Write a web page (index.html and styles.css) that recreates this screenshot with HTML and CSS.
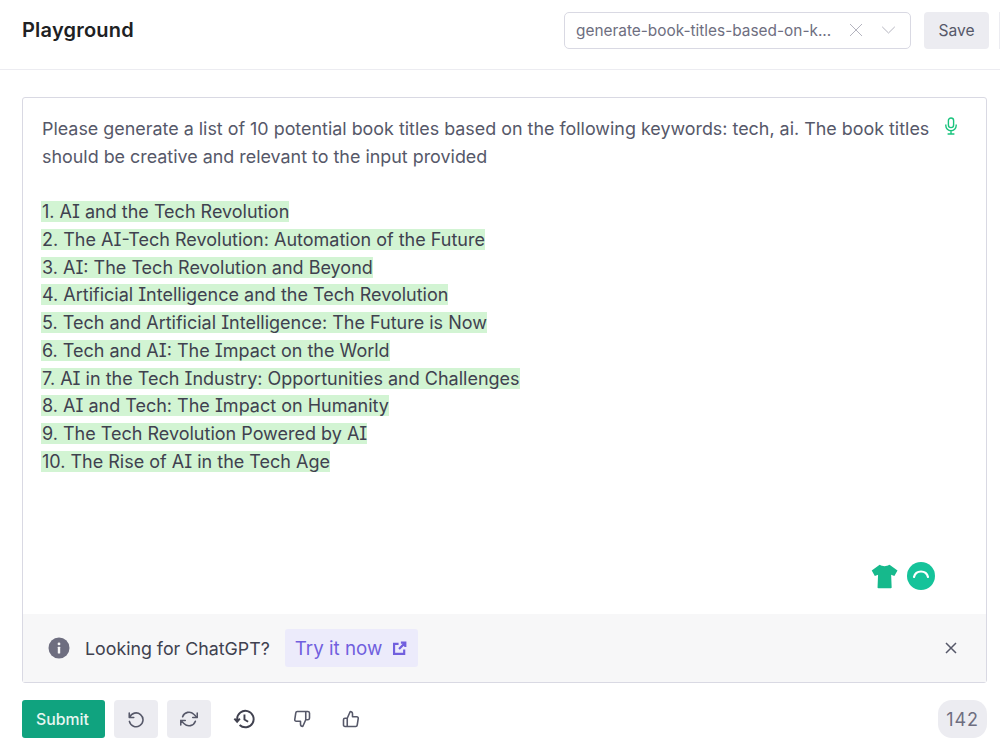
FILE: index.html
```html
<!DOCTYPE html>
<html lang="en">
<head>
<meta charset="utf-8">
<title>Playground</title>
<link rel="stylesheet" href="styles.css">
</head>
<body>
<header class="topbar">
  <h1 class="title">Playground</h1>
  <div class="top-actions">
    <div class="preset">
      <span class="preset-text">generate-book-titles-based-on-k...</span>
      <svg class="preset-x" viewBox="0 0 14 14"><path d="M1 1l12 12M13 1L1 13"/></svg>
      <svg class="preset-chev" viewBox="0 0 14 8"><path d="M.7.8L7 7l6.3-6.2"/></svg>
    </div>
    <button class="btn-save">Save</button>
    <span class="next-edge"></span>
  </div>
</header>
<main class="content">
  <section class="editor">
    <div class="editor-body">
      <div class="prompt">
        <p class="prompt-text">Please generate a list of 10 potential book titles based on the following keywords: tech, ai. The book titles should be creative and relevant to the input provided</p>
        <svg class="mic" viewBox="0 0 14 18"><rect x="4.4" y="1" width="5.2" height="9.6" rx="2.6"/><path d="M1.8 7.5v1a5.2 5.2 0 0 0 10.4 0v-1M7 13.7V17M3.6 17h6.8"/></svg>
      </div>
      <ol class="result">
        <li><mark>1. AI and the Tech Revolution</mark></li>
        <li><mark>2. The AI-Tech Revolution: Automation of the Future</mark></li>
        <li><mark>3. AI: The Tech Revolution and Beyond</mark></li>
        <li><mark>4. Artificial Intelligence and the Tech Revolution</mark></li>
        <li><mark>5. Tech and Artificial Intelligence: The Future is Now</mark></li>
        <li><mark>6. Tech and AI: The Impact on the World</mark></li>
        <li><mark>7. AI in the Tech Industry: Opportunities and Challenges</mark></li>
        <li><mark>8. AI and Tech: The Impact on Humanity</mark></li>
        <li><mark>9. The Tech Revolution Powered by AI</mark></li>
        <li><mark>10. The Rise of AI in the Tech Age</mark></li>
      </ol>
      <div class="floaters">
        <svg class="shirt" viewBox="0 0 26 24"><path d="M8.600 .8c1.200 1 2.700 1.400 4.400 1.400s3.200-.4 4.400-1.400l.8.100 7.300 5.300-3 5.300-3.100-1.300.5 12.600-.8.400H7.100l-.8-.400.5-12.600-3.100 1.300-3-5.300 7.300-5.300z"/></svg>
        <svg class="grammar" viewBox="0 0 28 28"><circle cx="14" cy="14" r="14"/><path d="M7 15a7.200 7.200 0 0 1 14 0"/></svg>
      </div>
    </div>
    <div class="notice">
      <svg class="info" viewBox="0 0 22 22"><circle cx="11" cy="11" r="10.500"/><rect class="info-mark" x="9.800" y="9.700" width="2.400" height="6.800" rx=".6"/><circle class="info-mark" cx="11" cy="6.900" r="1.400"/></svg>
      <span class="notice-text">Looking for ChatGPT?</span>
      <a class="try-link">Try it now
        <svg class="ext" viewBox="0 0 16 16"><path d="M7 3H2.200v10.800H13V9M9.500 1.800h4.700v4.700M14 2L7.500 8.500"/></svg>
      </a>
      <svg class="notice-close" viewBox="0 0 12 12"><path d="M1 1l10 10M11 1L1 11"/></svg>
    </div>
  </section>
  <footer class="toolbar">
    <button class="btn-submit">Submit</button>
    <button class="btn-icon">
      <svg class="tool" viewBox="0 0 24 24"><path d="M3 4v6h6M3.600 9.700a9.200 9.200 0 1 1-.4 5.500"/></svg>
    </button>
    <button class="btn-icon">
      <svg class="tool" viewBox="0 0 24 24"><path d="M23 4v6h-6M1 20v-6h6M3.500 9a9 9 0 0 1 14.900-3.400L23 10M1 14l4.600 4.400A9 9 0 0 0 20.500 15"/></svg>
    </button>
    <button class="btn-plain btn-history">
      <svg class="tool-history" viewBox="0 0 24 24"><path d="M1.500 11.500l3 3.500 3-3.500M4.500 14.500V12a9 9 0 1 1 2.700 6.500M12.500 7v5.500l4 2.500"/></svg>
    </button>
    <button class="btn-plain btn-down">
      <svg class="tool" viewBox="0 0 24 24"><path d="M10 15v4a3 3 0 0 0 3 3l4-9V2H5.720a2 2 0 0 0-2 1.700l-1.380 9a2 2 0 0 0 2 2.300zM17 2h2.670A2.310 2.310 0 0 1 22 4v7a2.310 2.310 0 0 1-2.330 2H17"/></svg>
    </button>
    <button class="btn-plain btn-up">
      <svg class="tool" viewBox="0 0 24 24"><path d="M14 9V5a3 3 0 0 0-3-3l-4 9v11h11.280a2 2 0 0 0 2-1.700l1.380-9a2 2 0 0 0-2-2.300zM7 22H4a2 2 0 0 1-2-2v-7a2 2 0 0 1 2-2h3"/></svg>
    </button>
    <span class="count">142</span>
  </footer>
</main>
</body>
</html>
```
FILE: styles.css
```css
* { box-sizing: border-box; }
html, body { margin: 0; height: 750px; overflow: hidden; }
body {
  background: #fff;
  font-family: Inter, "Liberation Sans", sans-serif;
  color: #353740;
  font-feature-settings: "cv08" 1;
}
button { font: inherit; border: 0; padding: 0; }
.topbar {
  height: 70px;
  display: flex;
  align-items: center;
  justify-content: space-between;
  padding: 0 0 9px 22px;
  border-bottom: 1px solid #ececf1;
}
.title { margin: 0; font-size: 20px; font-weight: 600; color: #202123; letter-spacing: .01em; }
.top-actions { display: flex; align-items: center; gap: 13px; }
.preset {
  width: 347px;
  height: 37px;
  display: flex;
  align-items: center;
  padding: 0 14px 0 11px;
  border: 1px solid #d9d9e3;
  border-radius: 5px;
  font-size: 15.400px;
  color: #6e6e80;
}
.preset-text { flex: 1; white-space: nowrap; }
.preset svg { fill: none; stroke: #b4b4bf; }
.preset-x { width: 14px; height: 14px; margin-right: 18px; }
.preset-chev { width: 15px; height: 8px; }
.btn-save {
  width: 65px;
  height: 37px;
  border-radius: 4px;
  background: #ececf1;
  color: #565869;
  font-size: 15.600px;
}
.next-edge { width: 1px; height: 37px; background: #ececf1; margin-left: -3px; }
.content { padding: 27px 13px 0 22px; }
.editor {
  height: 586px;
  display: flex;
  flex-direction: column;
  border: 1px solid #d9d9e3;
  border-radius: 3px;
}
.editor-body { flex: 1; position: relative; padding: 17px 18px 16px 19px; }
.prompt { display: flex; justify-content: space-between; align-items: flex-start; }
.prompt-text { margin: 0; width: 892px; font-size: 17.900px; line-height: 27.700px; color: #565869; }
.mic { width: 14px; height: 18px; margin: 2px 10px 0 0; fill: none; stroke: #19c37d; stroke-width: 1.400; }
.result { list-style: none; margin: 28px 0 0; padding: 0; font-size: 18px; line-height: 27.700px; color: #40414f; }
.result li { height: 27.700px; }
mark { background: #d2f4d3; color: inherit; margin-left: -1px; padding-left: 1px; }
.floaters { position: absolute; right: 51px; bottom: 24px; display: flex; align-items: center; gap: 9px; }
.shirt { width: 27px; height: 25px; fill: #16b98c; }
.grammar { width: 28px; height: 28px; }
.grammar circle { fill: #15c39a; }
.grammar path { fill: none; stroke: #fff; stroke-width: 2.200; stroke-linecap: round; }
.notice {
  height: 68px;
  display: flex;
  align-items: center;
  padding: 0 29px 0 25px;
  background: #f7f7f8;
}
.info { width: 22px; height: 22px; fill: #6e6e80; }
.info .info-mark { fill: #f7f7f8; }
.notice-text { margin-left: 15px; font-size: 17.800px; color: #40414f; }
.try-link {
  display: flex;
  align-items: center;
  gap: 10px;
  margin-left: 15px;
  height: 38px;
  padding: 0 11px 0 10px;
  border-radius: 3px;
  background: #ecebfb;
  color: #715fde;
  font-size: 18.800px;
}
.ext { width: 15px; height: 15px; fill: none; stroke: #715fde; stroke-width: 2.300; }
.notice-close { width: 12px; height: 12px; margin-left: auto; fill: none; stroke: #565869; stroke-width: 1.500; }
.toolbar { display: flex; align-items: center; margin-top: 17px; }
.btn-submit {
  width: 83px;
  height: 38px;
  padding-right: 2px;
  border-radius: 3px;
  background: #10a37f;
  color: #e6f6f1;
  font-size: 15.800px;
  font-weight: 500;
}
.btn-icon {
  width: 44px;
  height: 38px;
  margin-left: 9px;
  border-radius: 4px;
  background: #ececf1;
  display: flex;
  align-items: center;
  justify-content: center;
}
.btn-plain { width: 22px; height: 38px; background: none; display: flex; align-items: center; justify-content: center; }
.btn-history { margin-left: 22px; }
.btn-down { margin-left: 36px; }
.btn-up { margin-left: 27px; }
.tool { width: 18px; height: 18px; fill: none; stroke: #565869; stroke-width: 2.100; stroke-linejoin: round; stroke-linecap: round; }
.tool-history { width: 22px; height: 22px; fill: none; stroke: #40414f; stroke-width: 2.100; }
.count {
  margin-left: auto;
  width: 49px;
  height: 38px;
  border-radius: 14px;
  background: #ececf1;
  color: #6e6e80;
  font-size: 18px;
  letter-spacing: .05em;
  display: flex;
  align-items: center;
  justify-content: center;
}
```
